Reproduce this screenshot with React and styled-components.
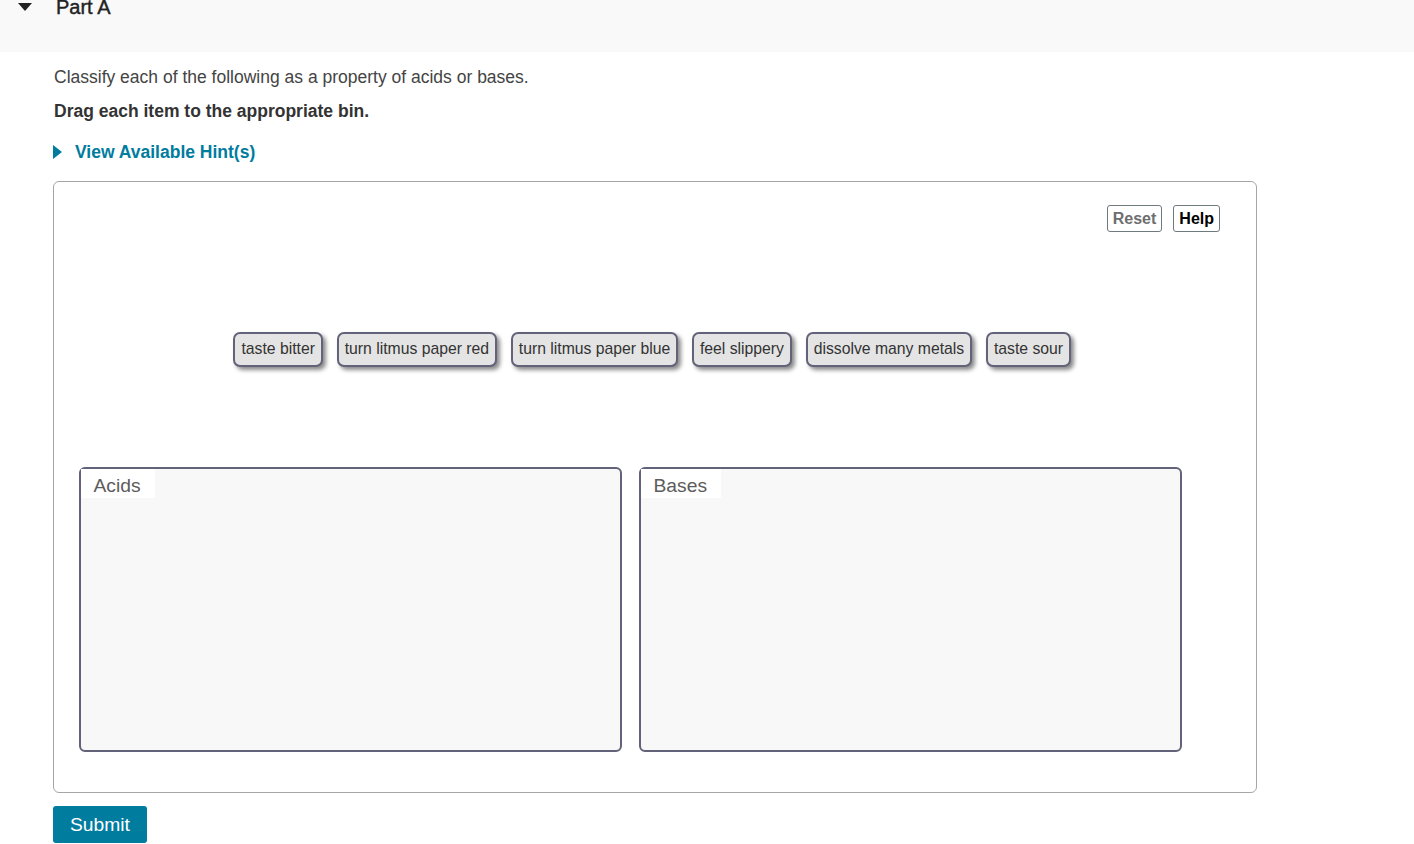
import React from "react";
import styled, { createGlobalStyle } from "styled-components";

const GlobalStyle = createGlobalStyle`
  html, body {
    margin: 0;
    height: 844px;
    overflow: hidden;
    background: #fff;
    font-family: "Liberation Sans", Arial, sans-serif;
    color: #333;
  }
`;

const PartHeader = styled.div`
  height: 52px;
  background: #f9f9f9;
  overflow: hidden;
  display: flex;
  align-items: flex-start;
  padding-left: 18px;
`;

const CaretDown = styled.span`
  width: 0;
  height: 0;
  margin-top: 3px;
  border-left: 7.5px solid transparent;
  border-right: 7.5px solid transparent;
  border-top: 8px solid #222;
`;

const PartTitle = styled.h2`
  margin: -4px 0 0 24px;
  font-size: 20px;
  line-height: 22px;
  font-weight: 400;
  color: #222;
  -webkit-text-stroke: 0.4px #222;
`;

const Content = styled.div`
  padding: 14px 0 0 53px;
  width: 1204px;
`;

const Prompt = styled.p`
  margin: 0;
  font-size: 17.5px;
  line-height: 22px;
  color: ${({ $bold }) => ($bold ? "#333" : "#444")};
  font-weight: ${({ $bold }) => ($bold ? 700 : 400)};
  margin-bottom: ${({ $gap }) => $gap}px;
  padding-left: 1px;
`;

const HintToggle = styled.a`
  display: flex;
  align-items: center;
  gap: 13px;
  font-size: 17.5px;
  line-height: 22px;
  font-weight: 700;
  color: #007c9e;
  margin-bottom: 18px;
`;

const CaretRight = styled.span`
  width: 0;
  height: 0;
  border-top: 7px solid transparent;
  border-bottom: 7px solid transparent;
  border-left: 9px solid #007c9e;
`;

const Panel = styled.div`
  box-sizing: border-box;
  height: 612px;
  border: 1px solid #a6a6a6;
  border-radius: 6px;
  padding: 23px 36px 0 24.5px;
  display: flex;
  flex-direction: column;
`;

const ToolBar = styled.div`
  display: flex;
  justify-content: flex-end;
  gap: 11px;
`;

const ToolButton = styled.button`
  box-sizing: border-box;
  height: 27px;
  padding: 0 5px;
  background: #fff;
  border: 1px solid #6f7a80;
  border-radius: 3px;
  font-family: inherit;
  font-size: 16px;
  font-weight: 700;
  color: ${({ $muted }) => ($muted ? "#6e6e6e" : "#000")};
`;

const TokenRow = styled.div`
  display: flex;
  justify-content: center;
  gap: 13.7px;
  margin-top: 100px;
  padding-left: 6px;
`;

const Token = styled.div`
  box-sizing: border-box;
  height: 35px;
  padding: 0 6px 2px;
  display: flex;
  align-items: center;
  background: #e4e4e4;
  border: 2px solid #62627a;
  border-radius: 7px;
  box-shadow: 3px 3px 4px #8a8a8a;
  font-size: 15.75px;
  color: #333;
  white-space: nowrap;
`;

const BinRow = styled.div`
  display: flex;
  gap: 17px;
  margin-top: 100px;
`;

const Bin = styled.div`
  box-sizing: border-box;
  width: 543px;
  height: 285px;
  background: #f8f8f8;
  border: 2px solid #62627a;
  border-radius: 6px;
`;

const BinLabel = styled.div`
  display: inline-block;
  padding: 0 14px 0 13px;
  height: 29px;
  line-height: 34px;
  background: #fff;
  font-size: 19.25px;
  color: #5c5c5c;
`;

const SubmitButton = styled.button`
  display: block;
  width: 94px;
  height: 37px;
  margin-top: 13px;
  background: #007c9e;
  border: none;
  border-radius: 3px;
  font-family: inherit;
  font-size: 19.25px;
  color: #fff;
`;

const tokens = [
  "taste bitter",
  "turn litmus paper red",
  "turn litmus paper blue",
  "feel slippery",
  "dissolve many metals",
  "taste sour",
];

export default function App() {
  return (
    <>
      <GlobalStyle />
      <PartHeader>
        <CaretDown />
        <PartTitle>Part A</PartTitle>
      </PartHeader>
      <Content>
        <Prompt $gap={12}>Classify each of the following as a property of acids or bases.</Prompt>
        <Prompt $bold $gap={19}>Drag each item to the appropriate bin.</Prompt>
        <HintToggle>
          <CaretRight />
          View Available Hint(s)
        </HintToggle>
        <Panel>
          <ToolBar>
            <ToolButton $muted>Reset</ToolButton>
            <ToolButton>Help</ToolButton>
          </ToolBar>
          <TokenRow>
            {tokens.map((t) => (
              <Token key={t}>{t}</Token>
            ))}
          </TokenRow>
          <BinRow>
            <Bin><BinLabel>Acids</BinLabel></Bin>
            <Bin><BinLabel>Bases</BinLabel></Bin>
          </BinRow>
        </Panel>
        <SubmitButton>Submit</SubmitButton>
      </Content>
    </>
  );
}
